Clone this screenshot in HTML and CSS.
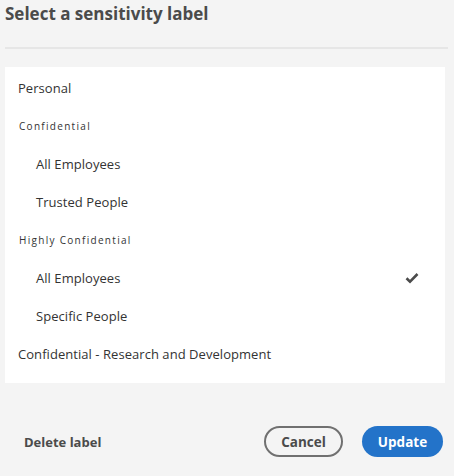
FILE: index.html
```html
<!DOCTYPE html>
<html>
<head>
<meta charset="utf-8">
<link rel="stylesheet" href="styles.css">
</head>
<body>
<div class="dialog">
  <h1 class="title">Select a sensitivity label</h1>
  <div class="divider"></div>
  <ul class="list">
    <li class="item">Personal</li>
    <li class="group">Confidential</li>
    <li class="item sub">All Employees</li>
    <li class="item sub">Trusted People</li>
    <li class="group">Highly Confidential</li>
    <li class="item sub selected">All Employees
      <svg class="check" width="14" height="12" viewBox="0 0 14 12"><path d="M1.5 6.2 L5 9.6 L12.5 2" fill="none" stroke="#4b4b4b" stroke-width="2.6"/></svg>
    </li>
    <li class="item sub">Specific People</li>
    <li class="item">Confidential - Research and Development</li>
  </ul>
  <div class="footer">
    <button class="link-btn">Delete label</button>
    <div class="actions">
      <button class="btn secondary">Cancel</button>
      <button class="btn primary">Update</button>
    </div>
  </div>
</div>
</body>
</html>
```
FILE: styles.css
```css
html, body {
  margin: 0;
  padding: 0;
  background: #f4f4f4;
}
body {
  font-family: "Open Sans", "Noto Sans", sans-serif;
  color: #333;
}
.dialog {
  width: 454px;
  height: 476px;
  padding: 0 0 0 5px;
  box-sizing: border-box;
}
.title {
  margin: 0;
  padding-top: 2px;
  font-size: 17px;
  line-height: 24px;
  font-weight: 700;
  color: #4b4b4b;
}
.divider {
  margin-top: 21px;
  width: 443px;
  height: 2px;
  background: #e6e6e6;
}
.list {
  list-style: none;
  margin: 18px 0 0 0;
  padding: 2px 0 10px 0;
  width: 440px;
  background: #fff;
}
.item, .group {
  height: 38px;
  display: flex;
  align-items: center;
  padding-left: 13px;
  position: relative;
}
.item {
  font-size: 13px;
  color: #333;
  letter-spacing: 0.05px;
}
.item.sub {
  padding-left: 31px;
}
.group {
  font-size: 10px;
  letter-spacing: 1.3px;
  color: #333;
  padding-left: 14px;
}
.check {
  position: absolute;
  left: 400px;
  top: 13px;
}
.footer {
  display: flex;
  justify-content: space-between;
  align-items: center;
  margin-top: 43px;
  padding-right: 11px;
  padding-left: 19px;
}
.link-btn {
  border: none;
  background: none;
  font-family: "Open Sans", sans-serif;
  font-weight: 700;
  font-size: 13px;
  color: #4b4b4b;
  padding: 0;
}
.actions {
  display: flex;
  gap: 19px;
}
.btn {
  height: 31px;
  border-radius: 16px;
  font-family: "Open Sans", sans-serif;
  font-weight: 700;
  font-size: 13.5px;
  padding: 0;
  box-sizing: border-box;
}
.secondary {
  width: 79px;
  border: 2px solid #707070;
  background: transparent;
  color: #4b4b4b;
}
.primary {
  width: 81px;
  border: none;
  background: #2373c9;
  color: #fff;
}
```
